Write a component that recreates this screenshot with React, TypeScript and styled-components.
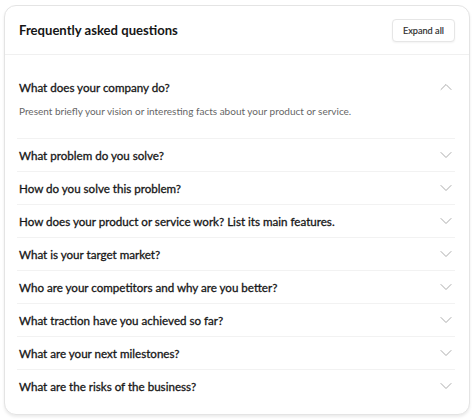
import React, { useState } from "react";
import styled, { createGlobalStyle } from "styled-components";

const GlobalStyle = createGlobalStyle`
    body {
        margin: 0;
        background: #ffffff;
        font-family: "Lato", "Open Sans", sans-serif;
        color: #1b1b1b;
    }
`;

const Card = styled.div`
    box-sizing: border-box;
    width: 466px;
    height: 410px;
    margin: 5px 4px;
    border: 1px solid #e4e4e4;
    border-radius: 12px;
    background: #fff;
    box-shadow: 0 2px 3px rgba(0, 0, 0, 0.08);
    overflow: hidden;
`;

const Header = styled.div`
    display: flex;
    align-items: center;
    justify-content: space-between;
    height: 48px;
    padding: 0 14px;
    border-bottom: 1px solid #f0f0f0;
`;

const Title = styled.h2`
    margin: 0;
    font-size: 13.1px;
    font-weight: 700;
    color: #161616;
`;

const ExpandButton = styled.button`
    box-sizing: border-box;
    height: 23px;
    padding: 0 10px;
    border: 1px solid #e6e6e6;
    border-radius: 4px;
    background: #fff;
    font-family: inherit;
    font-size: 9.2px;
    font-weight: 400;
    color: #2a2a2a;
    -webkit-text-stroke: 0.15px #2a2a2a;
    box-shadow: 0 1px 2px rgba(0, 0, 0, 0.05);
    cursor: pointer;
`;

const List = styled.div`
    padding: 16px 14px 0 12px;
`;

const Item = styled.div`
    & + & {
        border-top: 1px solid #f2f2f2;
    }
`;

const Question = styled.div`
    display: flex;
    align-items: center;
    justify-content: space-between;
    height: 32px;
    padding: 0 3px 0 2px;
    font-size: 11.6px;
    font-weight: 400;
    color: #161616;
    -webkit-text-stroke: 0.3px #161616;
    cursor: pointer;
`;

const Answer = styled.p`
    margin: 0;
    padding: 0 2px 19px;
    font-size: 10px;
    line-height: 16px;
    color: #666;
`;

const Chevron = ({ open }: { open: boolean }) => (
    <svg width="12" height="8" viewBox="0 0 12 8" fill="none">
        <path
            d={open ? "M1 6.5 L6 1.5 L11 6.5" : "M1 1.5 L6 6.5 L11 1.5"}
            stroke="#ababab"
            strokeWidth="1"
            strokeLinecap="round"
            strokeLinejoin="round"
        />
    </svg>
);

const faqs = [
    {
        q: "What does your company do?",
        a: "Present briefly your vision or interesting facts about your product or service.",
    },
    { q: "What problem do you solve?", a: "" },
    { q: "How do you solve this problem?", a: "" },
    { q: "How does your product or service work? List its main features.", a: "" },
    { q: "What is your target market?", a: "" },
    { q: "Who are your competitors and why are you better?", a: "" },
    { q: "What traction have you achieved so far?", a: "" },
    { q: "What are your next milestones?", a: "" },
    { q: "What are the risks of the business?", a: "" },
];

export default function App() {
    const [openItems, setOpenItems] = useState<number[]>([0]);

    const toggle = (i: number) =>
        setOpenItems(openItems.includes(i) ? openItems.filter(x => x !== i) : [...openItems, i]);

    return (
        <>
            <GlobalStyle />
            <Card>
                <Header>
                    <Title>Frequently asked questions</Title>
                    <ExpandButton onClick={() => setOpenItems(faqs.map((_, i) => i))}>
                        Expand all
                    </ExpandButton>
                </Header>
                <List>
                    {faqs.map((faq, i) => {
                        const open = openItems.includes(i);
                        return (
                            <Item key={faq.q}>
                                <Question onClick={() => toggle(i)}>
                                    <span>{faq.q}</span>
                                    <Chevron open={open} />
                                </Question>
                                {open && faq.a && <Answer>{faq.a}</Answer>}
                            </Item>
                        );
                    })}
                </List>
            </Card>
        </>
    );
}
